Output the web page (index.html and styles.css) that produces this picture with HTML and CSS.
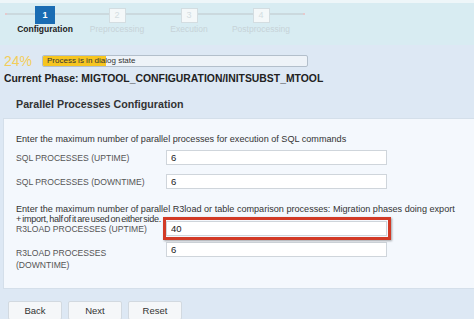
FILE: index.html
```html
<!DOCTYPE html>
<html lang="en">
  <head>
    <meta charset="UTF-8" />
    <meta name="viewport" content="width=device-width, initial-scale=1.0" />
    <title>Parallel Processes Configuration</title>
    <link rel="stylesheet" href="styles.css">
  </head>
  <body>
    <div class="roadmap">
      <div class="steps">
        <div class="step active">
          <span class="step-box">1</span>
          <span class="step-label">Configuration</span>
        </div>
        <div class="step">
          <span class="step-box">2</span>
          <span class="step-label">Preprocessing</span>
        </div>
        <div class="step">
          <span class="step-box">3</span>
          <span class="step-label">Execution</span>
        </div>
        <div class="step">
          <span class="step-box">4</span>
          <span class="step-label">Postprocessing</span>
        </div>
      </div>
    </div>

    <div class="main">
      <div class="progress-row">
        <span class="percent">24%</span>
        <div class="progress-bar">
          <div class="progress-fill" style="width: 24%"></div>
          <span class="progress-text">Process is in dialog state</span>
        </div>
      </div>
      <div class="phase">Current Phase: MIGTOOL_CONFIGURATION/INITSUBST_MTOOL</div>

      <h2 class="section-title">Parallel Processes Configuration</h2>

      <div class="panel">
        <p class="hint">Enter the maximum number of parallel processes for execution of SQL commands</p>
        <div class="field">
          <label>SQL PROCESSES (UPTIME)</label>
          <input type="text" value="6" />
        </div>
        <div class="field">
          <label>SQL PROCESSES (DOWNTIME)</label>
          <input type="text" value="6" />
        </div>
        <p class="hint hint-wide">Enter the maximum number of parallel R3load or table comparison processes: Migration phases doing export <span class="hint-tail">+ import, half of it are used on either side.</span></p>
        <div class="field field-tight">
          <label>R3LOAD PROCESSES (UPTIME)</label>
          <div class="highlight">
            <input type="text" value="40" />
          </div>
        </div>
        <div class="field">
          <label class="two-line">R3LOAD PROCESSES<br />(DOWNTIME)</label>
          <input type="text" value="6" />
        </div>
      </div>

      <div class="actions">
        <button class="button">Back</button>
        <button class="button">Next</button>
        <button class="button">Reset</button>
      </div>
    </div>
  </body>
</html>
```

FILE: styles.css
```css
body {
  margin: 0;
  padding: 0;
  font-family: 'Liberation Sans', Arial, sans-serif;
  background-color: #dde8f4;
  color: #333;
  overflow: hidden;
}
.roadmap {
  background-color: #d8ecf2;
  border-top: 3px solid #eef6f9;
  height: 45px;
  box-sizing: border-box;
}
.steps {
  position: relative;
  display: grid;
  grid-template-columns: repeat(4, 72px);
  padding: 3px 0 0 9px;
}
.steps::before {
  content: "";
  position: absolute;
  left: 5px;
  width: 296px;
  top: 10px;
  height: 2px;
  background-color: #cbd9de;
  border-left: 2px solid #e6c9cc;
  border-right: 2px solid #e6c9cc;
}
.step {
  display: flex;
  flex-direction: column;
  align-items: center;
  position: relative;
}
.step-box {
  width: 15px;
  height: 13px;
  margin-top: 2px;
  border: 1px solid #d3dde1;
  background-color: #f4f8f9;
  color: #d3dde1;
  font-size: 9px;
  line-height: 13px;
  text-align: center;
}
.step-label {
  margin-top: 1px;
  font-size: 8.5px;
  color: #c7d3d8;
  white-space: nowrap;
}
.step.active .step-box {
  width: 18px;
  height: 16px;
  margin-top: 0;
  border-color: #1a6cb3;
  background-color: #1a6cb3;
  color: white;
  font-weight: bold;
  line-height: 16px;
}
.step.active .step-label {
  margin-top: 0;
  color: #222;
  font-weight: bold;
}
.main {
  padding: 8px 0 0 0;
}
.progress-row {
  display: flex;
  align-items: center;
  padding-left: 4px;
}
.percent {
  width: 38px;
  font-size: 14px;
  color: #f3cd5a;
}
.progress-bar {
  position: relative;
  width: 264px;
  height: 10px;
  border: 1px solid #b3bfcb;
  border-radius: 2px;
  background-color: #eef3f8;
  overflow: hidden;
}
.progress-fill {
  height: 100%;
  background-color: #f6c51f;
}
.progress-text {
  position: absolute;
  left: 4px;
  top: 0;
  font-size: 8px;
  line-height: 10px;
  color: #333;
}
.phase {
  margin: 4px 0 0 4px;
  font-size: 10.4px;
  font-weight: bold;
  color: #222;
}
.section-title {
  margin: 0 0 0 16px;
  padding-top: 14px;
  font-size: 10.7px;
  font-weight: bold;
  color: #333;
  height: 20px;
}
.panel {
  margin-left: 3px;
  background-color: #f4f8fd;
  border: 1px solid #d4dfea;
  border-right: none;
  padding: 15px 0 17px 12px;
}
.hint {
  margin: 0 0 6px 0;
  font-size: 9.1px;
  line-height: 10px;
  color: #333;
  width: 446px;
}
.hint-wide {
  margin-top: 15px;
  margin-bottom: -3px;
}
.hint-tail {
  letter-spacing: -0.3px;
  word-spacing: -1px;
}
.field {
  display: flex;
  align-items: flex-start;
  margin-bottom: 9px;
}
.field:last-child {
  margin-bottom: 0;
}
.field-tight {
  margin-bottom: 6px;
}
.field label {
  width: 150px;
  padding-top: 3px;
  font-size: 8.6px;
  line-height: 11px;
  color: #555;
}
.field label.two-line {
  padding-top: 5px;
  line-height: 12px;
}
.field input {
  width: 221px;
  height: 15px;
  box-sizing: border-box;
  border: 1px solid #cfd5db;
  background-color: white;
  padding: 0 4px;
  font-family: inherit;
  font-size: 9.5px;
  color: #222;
  outline: none;
}
.highlight {
  position: relative;
}
.highlight input {
  display: block;
}
.highlight::after {
  content: "";
  position: absolute;
  top: -4px;
  bottom: -4px;
  left: -3px;
  right: -4px;
  border: 3px solid #d23a26;
  box-shadow: 1px 1px 2px rgba(0, 0, 0, 0.35);
}
.actions {
  display: flex;
  gap: 6px;
  padding: 12px 0 0 8px;
}
.button {
  width: 54px;
  height: 19px;
  border: 1px solid #d2d9e0;
  border-radius: 2px;
  background-color: #f5f7f9;
  font-family: inherit;
  font-size: 9.5px;
  color: #333;
  padding: 0;
}
```
